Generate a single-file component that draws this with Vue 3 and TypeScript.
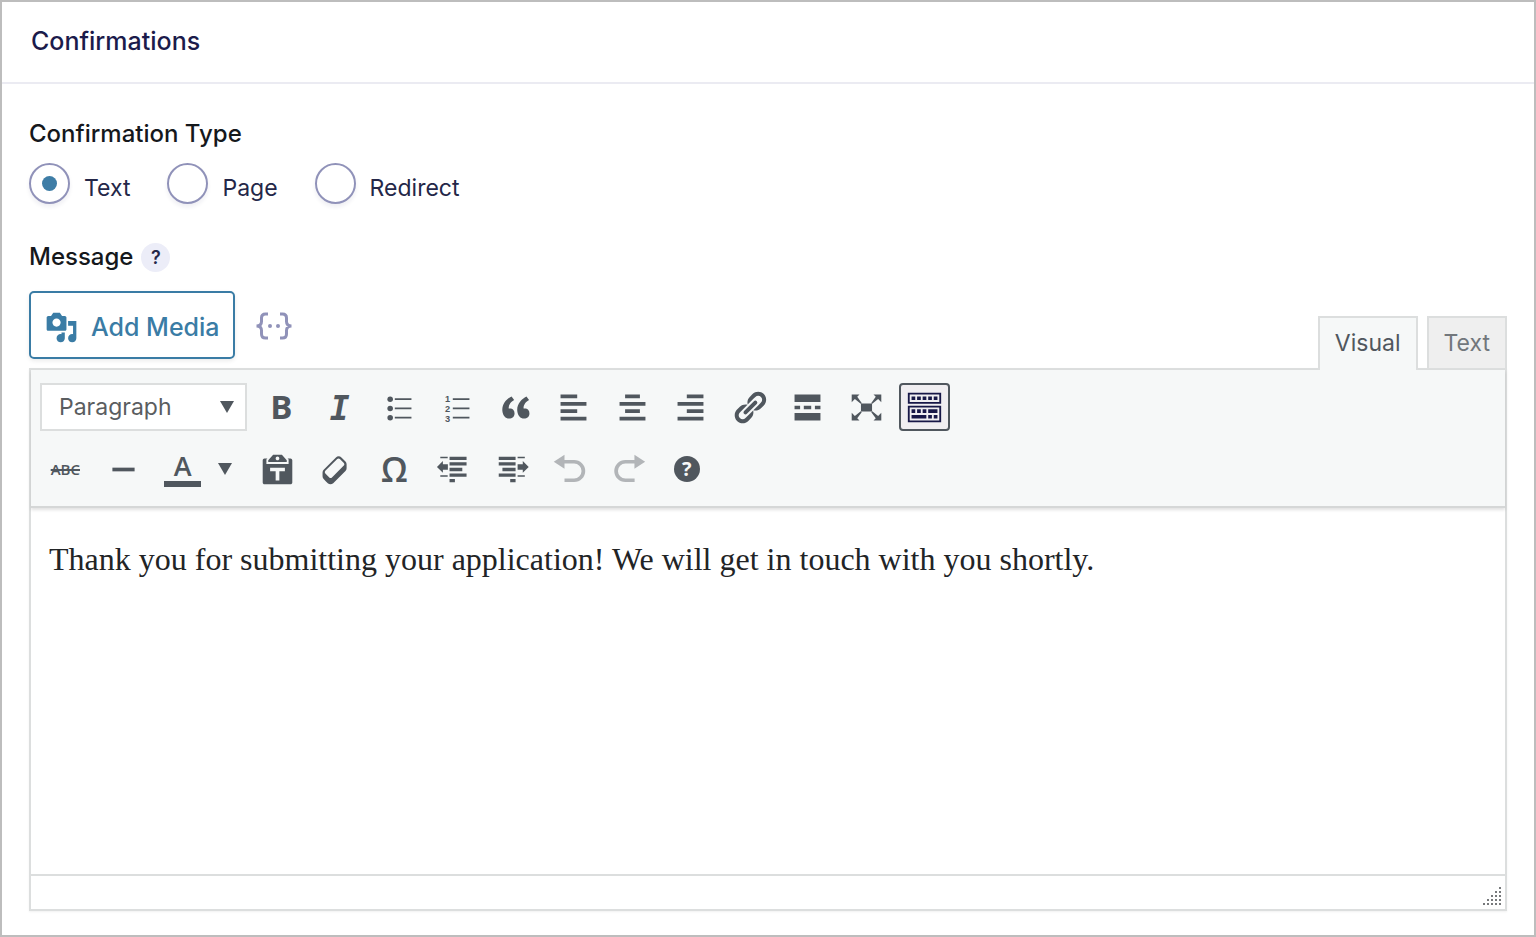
<script setup lang="ts">
import { ref } from 'vue'

interface Tool {
  name: string
  d?: string
  kind?: string
}

const types = ['Text', 'Page', 'Redirect']
const confirmationType = ref('Text')
const blockFormat = ref('Paragraph')
const message = ref('Thank you for submitting your application! We will get in touch with you shortly.')

const primaryTools: Tool[] = [
  { name: 'Bold', kind: 'bold' },
  { name: 'Italic', kind: 'italic' },
  { name: 'Bulleted list', kind: 'bullets' },
  { name: 'Numbered list', kind: 'numbers' },
  {
    name: 'Blockquote',
    d: 'M9.49 13.22c0-.74-.2-1.38-.61-1.9-.62-.78-1.83-.88-2.53-.72-.29-1.65 1.11-3.75 2.92-4.65L7.88 4c-2.73 1.3-5.42 4.28-4.96 8.05C3.21 14.43 4.59 16 6.54 16c.85 0 1.56-.25 2.12-.75s.83-1.18.83-2.03zm8.05 0c0-.74-.2-1.38-.61-1.9-.63-.78-1.83-.88-2.53-.72-.29-1.65 1.11-3.75 2.92-4.65L15.93 4c-2.73 1.3-5.41 4.28-4.95 8.05.28 2.38 1.66 3.95 3.61 3.95.85 0 1.56-.25 2.12-.75s.83-1.18.83-2.03z',
  },
  { name: 'Align left', d: 'M12 5V3H3v2h9zm5 4V7H3v2h14zm-5 4v-2H3v2h9zm5 4v-2H3v2h14z' },
  { name: 'Align center', d: 'M14 5V3H6v2h8zm3 4V7H3v2h14zm-3 4v-2H6v2h8zm3 4v-2H3v2h14z' },
  { name: 'Align right', d: 'M17 5V3H8v2h9zm0 4V7H3v2h14zm0 4v-2H8v2h9zm0 4v-2H3v2h14z' },
  {
    name: 'Insert link',
    d: 'M17.74 2.76c1.68 1.69 1.68 4.41 0 6.1l-1.53 1.52c-1.12 1.12-2.7 1.47-4.14 1.09l2.62-2.61.76-.77.76-.76c.84-.84.84-2.2 0-3.04-.84-.85-2.2-.85-3.04 0l-.77.76-3.38 3.38c-.37-1.44-.02-3.02 1.1-4.14l1.52-1.53c1.69-1.68 4.42-1.68 6.1 0zM8.59 13.43l5.34-5.34c.42-.42.42-1.1 0-1.52-.44-.43-1.13-.39-1.53 0l-5.33 5.34c-.42.42-.42 1.1 0 1.52.44.43 1.13.39 1.52 0zm-.76 2.29l4.14-4.15c.38 1.44.03 3.02-1.09 4.14l-1.52 1.53c-1.69 1.68-4.41 1.68-6.1 0-1.68-1.68-1.68-4.42 0-6.1l1.53-1.52c1.12-1.12 2.7-1.47 4.14-1.1l-4.14 4.15c-.85.84-.85 2.2 0 3.05.84.84 2.2.84 3.04 0z',
  },
  { name: 'Insert Read More tag', d: 'M17 7V3H3v4h14zM6 11V9H3v2h3zm6 0V9H8v2h4zm5 0V9h-3v2h3zm0 6v-4H3v4h14z' },
  {
    name: 'Fullscreen',
    d: 'M7 7.9h6v4.2H7zM2 3h4.2L5 4.2l2.4 3.3-.5.5-3.2-2.600L2 7.200zM18 3v4.200l-1.700-1.800-3.200 2.600-.5-.5L15 4.200 13.800 3zM2 17v-4.200l1.700 1.800 3.200-2.600.5.5L5 15.800 6.200 17zM18 17h-4.200l1.200-1.200-2.400-3.300.5-.5 3.200 2.600 1.700-1.800z',
  },
  {
    name: 'Toolbar Toggle',
    kind: 'active',
    d: 'M19 2v6H1V2h18zm-1 5V3H2v4h16zM5 4v2H3V4h2zm3 0v2H6V4h2zm3 0v2H9V4h2zm3 0v2h-2V4h2zm3 0v2h-2V4h2zm2 5v9H1V9h18zm-1 8v-7H2v7h16zM5 11v2H3v-2h2zm3 0v2H6v-2h2zm3 0v2H9v-2h2zm6 0v2h-5v-2h5zm-6 3v2H3v-2h8zm3 0v2h-2v-2h2zm3 0v2h-2v-2h2z',
  },
]

const secondaryTools: Tool[] = [
  {
    name: 'Paste as text',
    d: 'M12.38 2L15 5v1H5V5l2.64-3h4.74zM10 5c.55 0 1-.44 1-1 0-.55-.45-1-1-1s-1 .45-1 1c0 .56.45 1 1 1zm5.45-1H17c.55 0 1 .45 1 1v12c0 .56-.45 1-1 1H3c-.55 0-1-.44-1-1V5c0-.55.45-1 1-1h1.55L4 4.63V7h12V4.63zM14 11V9H6v2h3v5h2v-5h3z',
  },
  {
    name: 'Clear formatting',
    d: 'M14.29 4.59l1.1 1.11c.41.4.61.94.61 1.47v2.12c0 .53-.2 1.07-.61 1.47l-6.63 6.63c-.4.41-.94.61-1.47.61s-1.07-.2-1.47-.61l-1.11-1.1-1.1-1.11c-.41-.4-.61-.94-.61-1.47v-2.12c0-.54.2-1.07.61-1.48l6.63-6.62c.4-.41.94-.61 1.47-.61s1.06.2 1.47.61zm-6.21 9.7l6.42-6.42c.39-.39.39-1.03 0-1.43L12.36 4.3c-.19-.19-.45-.29-.72-.29s-.52.1-.71.29l-6.42 6.42c-.39.4-.39 1.04 0 1.43l2.14 2.14c.38.38 1.04.38 1.43 0z',
  },
  { name: 'Special character', kind: 'omega' },
  {
    name: 'Decrease indent',
    d: 'M8.4 3.1h9.2v1.8H8.4zM8.4 6.1h9.2v1.8H8.4zM8.4 9.1h6.9v1.8H8.4zM8.4 12.1h9.2v1.8H8.4zM8.4 15.1h2.9v1.8H8.4zM3.4 3.1h4v.8h-4zM3.4 13.1h4v.8h-4zM1.600 8.600l3.200-3.200v1.700h2.700v3H4.800v1.700z',
  },
  {
    name: 'Increase indent',
    d: 'M3.1 3.1h9.1v1.8H3.1zM3.1 6.1h9.1v1.8H3.1zM5.1 9.1h7.1v1.8H5.1zM3.1 12.1h9.1v1.8H3.1zM9.3 15.1h2.9v1.8H9.3zM13.3 3.1h3.9v.8h-3.9zM13.3 13.1h3.9v.8h-3.9zM19.3 8.6l-3.2-3.2v1.7h-2.8v3h2.8v1.7z',
  },
  { name: 'Undo', kind: 'undo' },
  { name: 'Redo', kind: 'redo' },
  { name: 'Keyboard Shortcuts', kind: 'help' },
]

const gripDots = [0, 1, 2, 3, 4].flatMap((row) =>
  Array.from({ length: row + 1 }, (_, i) => ({ x: 16 - i * 4, y: row * 4 })),
)
</script>

<template>
  <main class="panel">
    <header class="panel-head">
      <h1>Confirmations</h1>
    </header>

    <form class="panel-body" @submit.prevent>
      <fieldset class="types">
        <legend>Confirmation Type</legend>
        <div class="type-list">
          <label v-for="t in types" :key="t" class="type">
            <input v-model="confirmationType" type="radio" name="confirmation-type" :value="t" />
            <span>{{ t }}</span>
          </label>
        </div>
      </fieldset>

      <div class="message-label">
        <label for="message">Message</label>
        <button type="button" class="tip" aria-label="Help for message">?</button>
      </div>

      <div class="editor-top">
        <div class="media">
          <button type="button" class="add-media">
            <svg viewBox="0 0 20 20" aria-hidden="true">
              <path d="M13 11V4c0-.55-.45-1-1-1h-1.67L9 1H5L3.67 3H2c-.55 0-1 .45-1 1v7c0 .55.45 1 1 1h10c.55 0 1-.45 1-1zM7 4.5c1.38 0 2.5 1.12 2.5 2.5S8.38 9.5 7 9.5 4.5 8.38 4.5 7 5.62 4.5 7 4.5zM14 6h5v10.5c0 1.38-1.12 2.5-2.5 2.5S14 17.88 14 16.5s1.12-2.5 2.5-2.5c.17 0 .34.02.5.05V9h-3V6zm-4 8.05V13h2v3.5c0 1.38-1.12 2.5-2.5 2.5S7 17.88 7 16.5 8.12 14 9.5 14c.17 0 .34.02.5.05z" />
            </svg>
            Add Media
          </button>
          <button type="button" class="merge" aria-label="Insert merge tag">
            <svg viewBox="0 0 38 30" aria-hidden="true">
              <path d="M13 3h-2.500q-4 0-4 4v3.500q0 4.500-5 4.500 5 0 5 4.500v3.500q0 4 4 4H13M25 3h2.500q4 0 4 4v3.500q0 4.500 5 4.500-5 0-5 4.500v3.500q0 4-4 4H25" />
              <circle cx="15" cy="15" r="2" />
              <circle cx="23" cy="15" r="2" />
            </svg>
          </button>
        </div>
        <div class="tabs">
          <button type="button" class="tab current">Visual</button>
          <button type="button" class="tab">Text</button>
        </div>
      </div>

      <section class="editor">
        <div class="toolbar">
          <div class="row">
            <div class="format">
              <select v-model="blockFormat" aria-label="Block format">
                <option>Paragraph</option>
                <option>Heading 1</option>
                <option>Heading 2</option>
              </select>
              <svg class="caret" viewBox="0 0 14 12" aria-hidden="true"><path d="M0 0h14L7 12z" /></svg>
            </div>
            <div class="tools primary">
              <button v-for="tool in primaryTools" :key="tool.name" type="button" class="tool" :class="tool.kind" :aria-label="tool.name">
                <span v-if="tool.kind === 'bold'" class="glyph-bold">B</span>
                <span v-else-if="tool.kind === 'italic'" class="glyph-italic">I</span>
                <svg v-else viewBox="0 0 20 20" aria-hidden="true">
                  <template v-if="tool.kind === 'bullets'">
                    <circle cx="5.500" cy="5.500" r="1.500" />
                    <circle cx="5.500" cy="10.500" r="1.500" />
                    <circle cx="5.500" cy="15.500" r="1.500" />
                  </template>
                  <g v-if="tool.kind === 'numbers'" class="digits">
                    <text x="3.800" y="6.800">1</text>
                    <text x="3.800" y="12.200">2</text>
                    <text x="3.800" y="17.600">3</text>
                  </g>
                  <path v-if="tool.d" :d="tool.d" />
                  <path v-else d="M8 5h9v1H8zM8 10h9v1H8zM8 15h9v1H8z" />
                </svg>
              </button>
            </div>
          </div>

          <div class="row">
            <div class="tools leading">
              <button type="button" class="tool" aria-label="Strikethrough"><s>ABC</s></button>
              <button type="button" class="tool" aria-label="Horizontal line">
                <svg viewBox="0 0 20 20" aria-hidden="true"><path d="M4 9h12v2H4z" /></svg>
              </button>
              <button type="button" class="tool" aria-label="Text color"><span class="glyph-color">A</span></button>
            </div>
            <button type="button" class="color-menu" aria-label="Choose text color">
              <svg class="caret" viewBox="0 0 14 12" aria-hidden="true"><path d="M0 0h14L7 12z" /></svg>
            </button>
            <div class="tools secondary">
              <button v-for="tool in secondaryTools" :key="tool.name" type="button" class="tool" :class="tool.kind" :aria-label="tool.name">
                <span v-if="tool.kind === 'omega'" class="glyph-omega">Ω</span>
                <span v-else-if="tool.kind === 'help'" class="glyph-help">?</span>
                <svg v-else viewBox="0 0 20 20" aria-hidden="true">
                  <template v-if="tool.kind === 'undo'">
                    <path d="M1.500 5.800L7.300 2v7.600z" />
                    <path class="line" d="M7 5.800h5.500a5 5 0 0 1 0 10H7.300" />
                  </template>
                  <template v-else-if="tool.kind === 'redo'">
                    <path d="M19 5.800L13.200 2v7.600z" />
                    <path class="line" d="M13.500 5.800H8.300a5 5 0 0 0 0 10h5" />
                  </template>
                  <path v-else :d="tool.d" />
                </svg>
              </button>
            </div>
          </div>
        </div>

        <textarea id="message" v-model="message" spellcheck="false"></textarea>

        <footer class="status">
          <svg viewBox="0 0 18 18" aria-hidden="true">
            <rect v-for="(dot, i) in gripDots" :key="i" :x="dot.x" :y="dot.y" width="2" height="2" />
          </svg>
        </footer>
      </section>
    </form>
  </main>
</template>

<style>
body {
  margin: 0;
  background: #fff;
}
</style>

<style scoped>
* {
  box-sizing: border-box;
}

.panel {
  min-height: 100vh;
  border: 2px solid #bdbdbd;
  background: #fff;
  color: #242748;
  font-family: Inter, "Liberation Sans", sans-serif;
}

button,
select {
  margin: 0;
  padding: 0;
  border: 0;
  background: none;
  color: inherit;
  font: inherit;
}

.panel-head {
  display: flex;
  align-items: center;
  height: 82px;
  padding: 0 29px 2px;
  border-bottom: 2px solid #ebebf2;
}

h1 {
  margin: 0;
  color: #1b1b4b;
  font-size: 25px;
  font-weight: 500;
  line-height: 32px;
}

.panel-body {
  padding: 34px 27px 24px;
}

.types {
  margin: 0;
  padding: 0;
  border: 0;
}

legend,
.message-label {
  padding: 0;
  color: #15181c;
  font-size: 24px;
  font-weight: 450;
  line-height: 32px;
}

.type-list {
  display: flex;
  gap: 37px;
  margin-top: 13px;
}

.type {
  display: flex;
  align-items: center;
  gap: 14px;
  font-size: 23px;
  line-height: 32px;
}

.type span {
  padding-top: 8px;
}

.type input {
  display: grid;
  place-items: center;
  appearance: none;
  width: 41px;
  height: 41px;
  margin: 0;
  border: 2px solid #9092b9;
  border-radius: 50%;
  box-shadow: 0 3px 4px rgba(30, 30, 80, 0.07);
}

.type input:checked::before {
  content: "";
  width: 15px;
  height: 15px;
  border-radius: 50%;
  background: #3e7da6;
}

.message-label {
  display: flex;
  align-items: center;
  gap: 8px;
  margin-top: 37px;
}

.tip {
  width: 29px;
  height: 29px;
  border-radius: 50%;
  background: #ecedf8;
  color: #242748;
  font-size: 18px;
  font-weight: 600;
  line-height: 29px;
}

.editor-top {
  display: flex;
  justify-content: space-between;
  align-items: flex-end;
  margin-top: 18px;
}

.media {
  display: flex;
  align-items: center;
  gap: 20px;
  padding-bottom: 9px;
}

.add-media {
  display: flex;
  align-items: center;
  gap: 13px;
  height: 68px;
  padding: 4px 13px 0 14px;
  border: 2px solid #3a7ca5;
  border-radius: 5px;
  box-shadow: 0 2px 4px rgba(0, 0, 0, 0.08);
  color: #3a7ca5;
  font-size: 25px;
  font-weight: 450;
}

.add-media svg {
  width: 33px;
  height: 33px;
  fill: currentColor;
}

.merge {
  display: flex;
  padding-top: 2px;
  color: #9092b9;
}

.merge svg {
  width: 38px;
  height: 30px;
  fill: currentColor;
}

.merge path {
  fill: none;
  stroke: currentColor;
  stroke-width: 3;
}

.tabs {
  display: flex;
  gap: 9px;
}

.tab {
  height: 52px;
  padding: 0 15px;
  border: 2px solid #dcdede;
  border-bottom: 0;
  background: #efefef;
  color: #72777c;
  font-size: 23px;
  line-height: 48px;
}

.tab.current {
  position: relative;
  z-index: 1;
  height: 54px;
  margin-bottom: -2px;
  padding-bottom: 2px;
  background: #f6f8f8;
  color: #50575e;
}

.editor {
  border: 2px solid #dcdede;
  box-shadow: 0 1px 2px rgba(0, 0, 0, 0.06);
}

.toolbar {
  position: relative;
  display: grid;
  gap: 14px;
  padding: 13px 9px 13px;
  border-bottom: 2px solid #d5d7d7;
  box-shadow: 0 2px 3px rgba(0, 0, 0, 0.12);
  background: #f6f8f8;
  color: #50575e;
}

.row {
  display: flex;
  align-items: center;
  height: 48px;
}

.format {
  display: grid;
  align-items: center;
  width: 207px;
}

.format select {
  grid-area: 1 / 1;
  appearance: none;
  width: 100%;
  height: 48px;
  padding: 0 36px 0 17px;
  border: 2px solid #dcdede;
  background: #fff;
  color: #5a5d60;
  font-size: 23px;
}

.format .caret {
  grid-area: 1 / 1;
  justify-self: end;
  margin-right: 13px;
  pointer-events: none;
}

.caret {
  width: 14px;
  height: 12px;
  fill: #50575e;
}

.tools {
  display: grid;
  justify-items: center;
  align-items: center;
}

.primary {
  grid-template-columns: repeat(12, 1fr);
  width: 702px;
  margin-left: 5px;
}

.leading {
  grid-template-columns: repeat(3, 1fr);
  width: 176px;
  margin-left: -4px;
}

.color-menu {
  display: flex;
  justify-content: center;
  width: 26px;
}

.secondary {
  grid-template-columns: repeat(8, 1fr);
  width: 468px;
  margin-left: 10px;
}

.tool {
  display: flex;
  align-items: center;
  justify-content: center;
  width: 51px;
  height: 48px;
}

.tool svg {
  width: 37px;
  height: 37px;
  fill: currentColor;
}

.tool.active {
  border: 2px solid #50575e;
  border-radius: 4px;
  background: #f0eef1;
  color: #171747;
}

.tool.undo,
.tool.redo {
  color: #b2b5b8;
}

.tool .line {
  fill: none;
  stroke: currentColor;
  stroke-width: 2;
}

.digits {
  font: 700 5px "Liberation Sans", sans-serif;
}

.glyph-bold {
  font: 700 33px/48px "Open Sans", sans-serif;
}

.glyph-italic {
  padding-top: 4px;
  font: italic 700 33px/48px "DejaVu Sans Mono", monospace;
}

.tool s {
  font: 600 15px/24px "Open Sans", sans-serif;
  text-decoration-thickness: 2px;
}

.glyph-color {
  width: 37px;
  height: 36px;
  border-bottom: 6px solid currentColor;
  font: 600 27px/30px "Open Sans", sans-serif;
}

.glyph-omega {
  font: 600 34px/48px "Open Sans", sans-serif;
}

.glyph-help {
  width: 26px;
  height: 26px;
  border-radius: 50%;
  background: #50575e;
  color: #f6f8f8;
  font: 700 20px/26px "Open Sans", sans-serif;
}

textarea {
  display: block;
  width: 100%;
  height: 366px;
  padding: 30px 18px;
  border: 0;
  outline: 0;
  resize: none;
  background: #fff;
  color: #222426;
  font: 32px/42px Georgia, "Liberation Serif", serif;
}

.status {
  display: flex;
  justify-content: flex-end;
  align-items: flex-end;
  height: 35px;
  padding: 0 4px 4px;
  border-top: 2px solid #dcdede;
}

.status svg {
  width: 18px;
  height: 18px;
  fill: #77797b;
}
</style>
